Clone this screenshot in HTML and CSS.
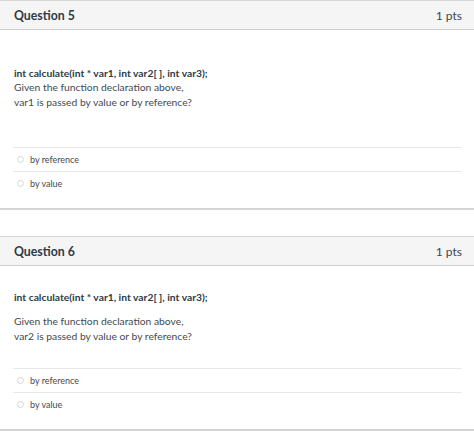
FILE: index.html
```html
<!DOCTYPE html>
<html>
<head>
<meta charset="utf-8">
<link rel="stylesheet" href="styles.css">
</head>
<body>
<div class="question q5">
  <div class="q-header">
    <span class="q-title">Question 5</span>
    <span class="q-pts">1 pts</span>
  </div>
  <div class="q-body">
    <p class="code">int calculate(int * var1, int var2[ ], int var3);</p>
    <p class="text">Given the function declaration above,<br>var1 is passed by value or by reference?</p>
    <div class="answers">
      <div class="answer"><span class="radio"></span><span>by reference</span></div>
      <div class="answer"><span class="radio"></span><span>by value</span></div>
    </div>
  </div>
</div>
<div class="question q6">
  <div class="q-header">
    <span class="q-title">Question 6</span>
    <span class="q-pts">1 pts</span>
  </div>
  <div class="q-body">
    <p class="code">int calculate(int * var1, int var2[ ], int var3);</p>
    <p class="text">Given the function declaration above,<br>var2 is passed by value or by reference?</p>
    <div class="answers">
      <div class="answer"><span class="radio"></span><span>by reference</span></div>
      <div class="answer"><span class="radio"></span><span>by value</span></div>
    </div>
  </div>
</div>
</body>
</html>
```
FILE: styles.css
```css
html, body {
  margin: 0;
  padding: 0;
  background: #fff;
}
body {
  font-family: Lato, "Liberation Sans", sans-serif;
  color: #2d3b45;
}
.question {
  border-top: 1px solid #d6d6d6;
  border-bottom: 2px solid #d4d4d4;
}
.q6 {
  margin-top: 26px;
}
.q-header {
  height: 28px;
  background: #f5f5f5;
  border-bottom: 1px solid #cfcfcf;
  display: flex;
  align-items: center;
  justify-content: space-between;
  padding: 0 12px 0 14px;
}
.q6 .q-header {
  height: 28px;
}
.q-title {
  font-weight: 700;
  font-size: 12.3px;
  color: #2d3b45;
}
.q-pts {
  font-size: 12px;
  color: #3d454c;
}
.q-body {
  padding: 37px 12px 13px 14px;
}
.q6 .q-body {
  padding-top: 25px;
}
.code {
  margin: 0;
  font-weight: 700;
  font-size: 10.3px;
  line-height: 13px;
  color: #2d3b45;
}
.text {
  margin: 0;
  font-size: 10.3px;
  line-height: 15px;
  color: #414a52;
}
.q6 .text {
  margin-top: 10px;
}
.answers {
  margin: 37px 0 0 -1px;
}
.q6 .answers {
  margin-top: 24px;
}
.answer {
  border-top: 1px solid #e8e8e8;
  height: 23px;
  display: flex;
  align-items: center;
  padding-left: 4px;
  font-size: 9px;
  color: #414a52;
}
.radio {
  width: 7px;
  height: 7px;
  border: 1px solid #d6d6d6;
  border-radius: 50%;
  margin-right: 6px;
  box-sizing: border-box;
}
```
